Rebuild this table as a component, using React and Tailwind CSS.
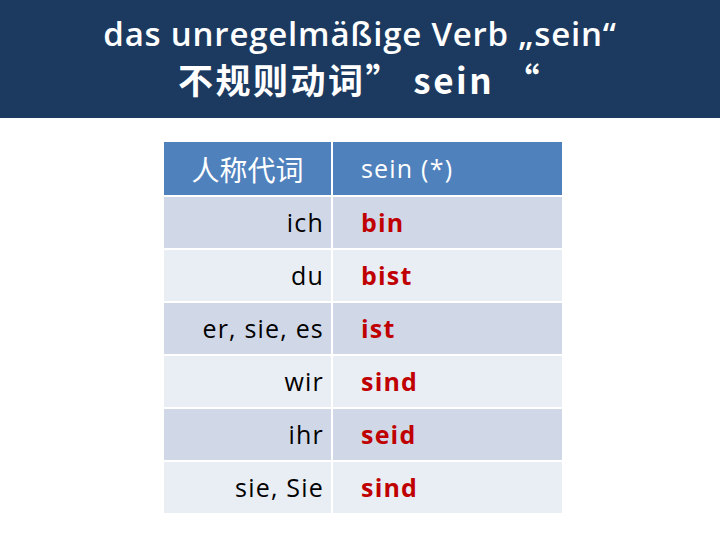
const rows = [
  ['ich', 'bin'],
  ['du', 'bist'],
  ['er, sie, es', 'ist'],
  ['wir', 'sind'],
  ['ihr', 'seid'],
  ['sie, Sie', 'sind'],
];

export default function App() {
  return (
    <div className="w-[720px] h-[540px] bg-white font-['Open_Sans','Noto_Sans_CJK_SC',sans-serif]">
      {/* title band */}
      <div className="h-[118px] bg-[#1c3a60] text-white flex flex-col items-center pt-[14px]">
        <div className="text-[33px] leading-[40px] font-semibold tracking-[0.8px]">das unregelmäßige Verb „sein“</div>
        <div className="text-[35px] leading-[50px] font-bold tracking-[2.5px] font-['Noto_Sans_CJK_SC',sans-serif]">不规则动词” sein “</div>
      </div>

      {/* conjugation table */}
      <div className="ml-[164px] mt-[24px] w-[398px] grid grid-cols-[167px_229px] gap-[2px] text-[25px] tracking-[1.2px]">
        <div className="h-[53px] bg-[#4f81bd] text-white text-[28px] tracking-normal flex items-center justify-center font-['Noto_Sans_CJK_SC',sans-serif]">人称代词</div>
        <div className="h-[53px] bg-[#4f81bd] text-white flex items-center pl-[28px]">sein (*)</div>
        {rows.map(([p, v], i) => (
          <div key={p + i} className="contents">
            <div
              className={
                i % 2 === 0
                  ? 'h-[51px] bg-[#d0d8e8] text-black flex items-center justify-end pr-[7px]'
                  : 'h-[51px] bg-[#e9edf4] text-black flex items-center justify-end pr-[7px]'
              }
            >
              {p}
            </div>
            <div
              className={
                i % 2 === 0
                  ? 'h-[51px] bg-[#d0d8e8] text-[#c00000] font-bold flex items-center pl-[28px]'
                  : 'h-[51px] bg-[#e9edf4] text-[#c00000] font-bold flex items-center pl-[28px]'
              }
            >
              {v}
            </div>
          </div>
        ))}
      </div>
    </div>
  );
}
